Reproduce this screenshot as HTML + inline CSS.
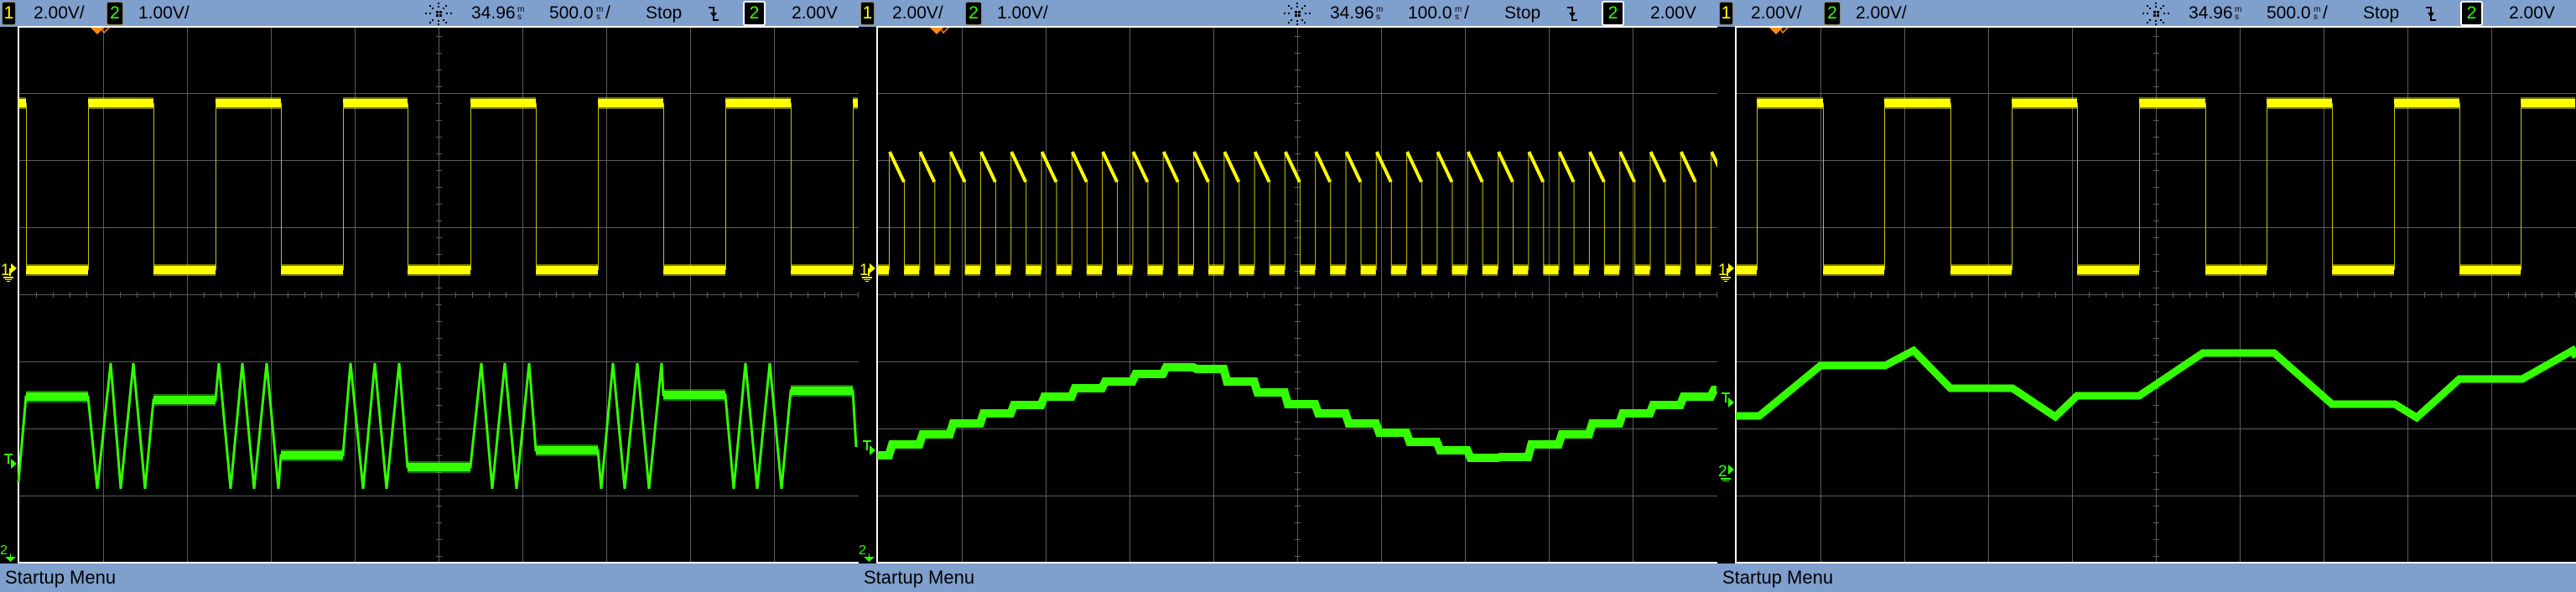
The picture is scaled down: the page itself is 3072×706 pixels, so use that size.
<!DOCTYPE html>
<html><head><meta charset="utf-8">
<style>
html,body{margin:0;padding:0;background:#000;}
body{width:3072px;height:706px;position:relative;overflow:hidden;font-family:"Liberation Sans",sans-serif;}
.p{position:absolute;top:0;width:1024px;height:706px;background:#000;overflow:hidden;}
.hd{position:absolute;left:0;top:0;width:1024px;height:32px;background:#7f9fcc;}
.ft{position:absolute;left:0;top:672px;width:1024px;height:34px;background:#7f9fcc;}
.t{position:absolute;top:5px;font-size:21px;line-height:22px;color:#000;white-space:nowrap;}
.box{position:absolute;top:2px;height:26px;background:#000;border:1px solid #8a8466;border-radius:3px;font-size:21px;line-height:26px;text-align:center;}
.u{position:absolute;font-size:10px;line-height:9px;color:#000;}
.ft span{position:absolute;left:6px;top:4px;font-size:22px;color:#000;}
svg{position:absolute;left:0;top:0;}
</style></head><body>
<div class="p" id="p0" style="left:0"></div>
<div class="p" id="p1" style="left:1024px"></div>
<div class="p" id="p2" style="left:2048px"></div>
<script>
function grid(){
 let s='<g stroke="#5c5c5c" stroke-width="1" shape-rendering="crispEdges">';
 for(let x=123;x<=923;x+=100) s+=`<line x1="${x+.5}" y1="33" x2="${x+.5}" y2="671"/>`;
 for(let y=111;y<=591;y+=80) s+=`<line x1="22" y1="${y+.5}" x2="1024" y2="${y+.5}"/>`;
 for(let y=43;y<=663;y+=20) s+=`<line x1="520" y1="${y+.5}" x2="527" y2="${y+.5}"/>`;
 for(let x=43;x<=1023;x+=20) s+=`<line x1="${x+.5}" y1="348" x2="${x+.5}" y2="355"/>`;
 s+='</g><g fill="#fff" shape-rendering="crispEdges"><rect x="21" y="32" width="2" height="640"/><rect x="21" y="31" width="1003" height="2"/><rect x="21" y="670" width="1003" height="2"/></g>';
 return s;
}
function band(x1,x2,y,c){return `<rect x="${x1}" y="${y-5}" width="${x2-x1}" height="10" fill="${c}"/><rect x="${x1}" y="${y-7}" width="${x2-x1}" height="2" fill="${c}" opacity=".45"/><rect x="${x1}" y="${y+5}" width="${x2-x1}" height="2" fill="${c}" opacity=".45"/>`;}
function square(edges,startHigh,hi,lo){
 let s='';let pts=[22].concat(edges).concat([1023]);let h=startHigh;
 for(let i=0;i<pts.length-1;i++){s+=band(pts[i],pts[i+1],h?hi:lo,'#ffff00');h=!h;}
 for(const e of edges) s+=`<line x1="${e+.5}" y1="${hi}" x2="${e+.5}" y2="${lo}" stroke="#c8c400" stroke-width="1"/>`;
 return s;
}
function markers(ch1y,ty,ch2){
 let s=`<g fill="#ffff00"><text x="1" y="${ch1y+8}" font-size="19" font-family="Liberation Sans" fill="#ffff00">1</text><polygon points="13,${ch1y-6} 20,${ch1y} 13,${ch1y+6}"/><rect x="11" y="${ch1y}" width="2" height="9"/><rect x="4" y="${ch1y+10}" width="12" height="2"/><rect x="6" y="${ch1y+13}" width="8" height="1"/><rect x="8" y="${ch1y+15}" width="4" height="1"/></g>`;
 s+=`<g fill="#33ff00"><rect x="5" y="${ty-12}" width="10" height="2"/><rect x="9" y="${ty-12}" width="2" height="12"/><polygon points="13,${ty-6} 20,${ty} 13,${ty+6}"/></g>`;
 if(ch2==='bottom'){s+=`<g fill="#33ff00"><text x="0" y="661" font-size="16" font-family="Liberation Sans" fill="#33ff00">2</text><rect x="12" y="660" width="1" height="4"/><polygon points="6,664 19,664 12.5,670"/></g>`;}
 else {const y=ch2;s+=`<g fill="#33ff00"><text x="1" y="${y+8}" font-size="19" font-family="Liberation Sans" fill="#33ff00">2</text><polygon points="13,${y-6} 20,${y} 13,${y+6}"/><rect x="4" y="${y+10}" width="12" height="2"/><rect x="6" y="${y+13}" width="8" height="1"/></g>`;}
 return s;
}
function trig(x){return `<polygon points="${x-10},33 ${x+6},33 ${x-2},41" fill="#ff8c10"/><polyline points="${x+2},33 ${x+6},39 ${x+12},33" fill="none" stroke="#ff8c10" stroke-width="1.5"/>`;}
function header(tb,v2){
 return `<div class="hd">
 <div class="box" style="left:2px;width:15px;color:#ffff00">1</div>
 <div class="t" style="left:40px">2.00V/</div>
 <div class="box" style="left:127px;width:18px;color:#33ff00">2</div>
 <div class="t" style="left:165px">${v2}</div>
 <svg width="1024" height="32" style="left:0;top:0"><g fill="#000">
  <rect x="520" y="13" width="3" height="3"/><rect x="524" y="13" width="3" height="3"/><rect x="520" y="17" width="3" height="3"/><rect x="524" y="17" width="3" height="3"/>
  <rect x="522" y="3" width="2" height="2"/><rect x="522" y="7" width="2" height="2"/><rect x="522" y="24" width="2" height="2"/><rect x="522" y="28" width="2" height="2"/>
  <rect x="507" y="15" width="2" height="2"/><rect x="512" y="15" width="2" height="2"/><rect x="532" y="15" width="2" height="2"/><rect x="537" y="15" width="2" height="2"/>
  <rect x="512" y="6" width="2" height="2"/><rect x="515" y="9" width="2" height="2"/><rect x="531" y="6" width="2" height="2"/><rect x="528" y="9" width="2" height="2"/>
  <rect x="512" y="26" width="2" height="2"/><rect x="515" y="23" width="2" height="2"/><rect x="531" y="26" width="2" height="2"/><rect x="528" y="23" width="2" height="2"/>
  </g>
  <path d="M845,9 H851 V24 H857 M848,15 L851,19 L854,15" fill="none" stroke="#000" stroke-width="2"/>
 </svg>
 <div class="t" style="left:562px">34.96</div><div class="u" style="left:617px;top:7px">m<br>s</div>
 <div class="t" style="left:655px">${tb}</div><div class="u" style="left:711px;top:7px">m<br>s</div><div class="t" style="left:722px">/</div>
 <div class="t" style="left:770px">Stop</div>
 <div class="box" style="left:886px;width:23px;border:2px solid #fff;top:1px;color:#33ff00">2</div>
 <div class="t" style="left:944px">2.00V</div>
 </div><div class="ft"><span>Startup Menu</span></div>`;
}
const G='#33ff00';
(function(){
 let s=grid();
 s+=square([31,105,183,257,335,409,486,561,639,713,791,865,943,1017],true,123,322);
 const flats=[[31,105,473],[183,257,477],[335,409,543],[486,561,557],[639,713,537],[791,865,471],[943,1017,466]];
 for(const f of flats) s+=band(f[0],f[1],f[2],G);
 const T=433,B=583;
 let pts=[[22,575],[31,473],[105,473],[116,B],[132,T],[144,B],[159,T],[173,B],[183,477],[257,477],[261,T],[275,B],[289,T],[303,B],[318,T],[332,B],[335,543],[409,543],[418,T],[433,B],[447,T],[461,B],[476,T],[486,557],[561,557],[574,T],[587,B],[602,T],[616,B],[631,T],[639,537],[713,537],[717,B],[731,T],[745,B],[760,T],[774,B],[789,T],[791,471],[865,471],[875,B],[889,T],[903,B],[918,T],[932,B],[943,466],[1017,466],[1021,533]];
 s+=`<polyline points="${pts.map(p=>p.join(',')).join(' ')}" fill="none" stroke="${G}" stroke-width="3"/>`;
 s+=markers(320,553,'bottom')+trig(118);
 document.getElementById('p0').innerHTML=header('500.0','1.00V/')+`<svg width="1024" height="706" style="top:0">${s}</svg>`;
})();
(function(){
 let s=grid();
 let st=[];for(let k=0;k<28;k++) st.push(36+36.3*k);
 s+=band(22,36,322,'#ffff00');
 for(const a of st){
  s+=band(a+18,Math.min(a+36.3,1023),322,'#ffff00');
  s+=`<line x1="${a+.5}" y1="182" x2="${a+.5}" y2="322" stroke="#c8c400" stroke-width="1"/><line x1="${a+18.5}" y1="216" x2="${a+18.5}" y2="322" stroke="#c8c400" stroke-width="1"/>`;
  s+=`<line x1="${a+1}" y1="181" x2="${a+18}" y2="217" stroke="#ffff00" stroke-width="4"/>`;
 }
 const lv=[543,530,518,505,493,483,473,463,455,446,438,440,455,468,482,493,505,516,527,537,546,545,530,518,505,493,483,473,465];
 let pts=[[22,lv[0]]];
 for(let k=0;k<28;k++){pts.push([st[k],lv[k]]);pts.push([st[k]+4,lv[k+1]]);}
 pts.push([1023,lv[28]]);
 s+=`<polyline points="${pts.map(p=>p.join(',')).join(' ')}" fill="none" stroke="${G}" stroke-width="10"/>`;
 s+=markers(320,537,'bottom')+trig(95);
 document.getElementById('p1').innerHTML=header('100.0','1.00V/')+`<svg width="1024" height="706" style="top:0">${s}</svg>`;
})();
(function(){
 let s=grid();
 s+=square([47,126,199,278,351,429,503,582,655,733,807,885,958],false,123,322);
 const pts=[[22,496],[50,496],[123,436],[200,436],[234,418],[278,463],[352,463],[403,497],[429,472],[503,472],[579,421],[664,421],[733,482],[808,482],[834,498],[885,452],[960,452],[1020,418],[1024,426]];
 s+=`<polyline points="${pts.map(p=>p.join(',')).join(' ')}" fill="none" stroke="${G}" stroke-width="9"/>`;
 s+=markers(320,480,560)+trig(72);
 document.getElementById('p2').innerHTML=header('500.0','2.00V/')+`<svg width="1024" height="706" style="top:0">${s}</svg>`;
})();
</script>
</body></html>
